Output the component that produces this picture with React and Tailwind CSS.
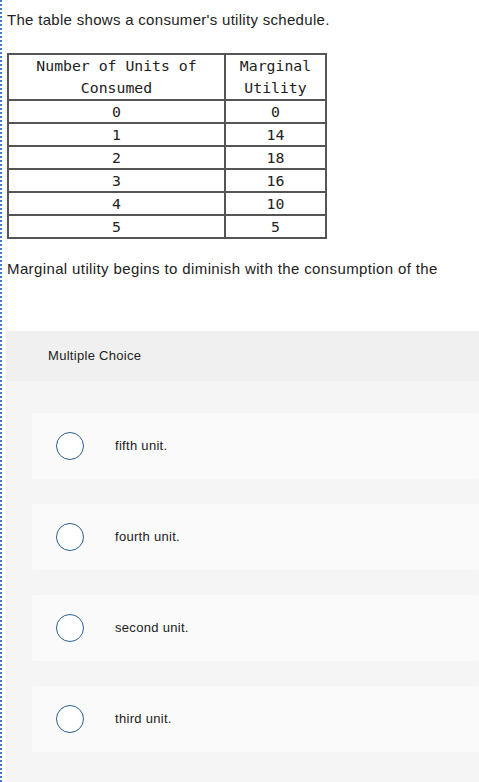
import React from 'react';

const rows = [
  ['0', '0'],
  ['1', '14'],
  ['2', '18'],
  ['3', '16'],
  ['4', '10'],
  ['5', '5'],
];

const choices = ['fifth unit.', 'fourth unit.', 'second unit.', 'third unit.'];

function Choice({ label }) {
  return (
    <div className="flex h-[66px] items-center rounded-[3px] bg-[#fafafa]">
      <span className="ml-[24px] h-[28px] w-[28px] rounded-full border-[1.5px] border-[#2c5f8f] bg-white" />
      <span className="ml-[31px] text-[13px] tracking-[0.3px] text-[#222]">{label}</span>
    </div>
  );
}

export default function App() {
  return (
    <div
      className="min-h-screen border-l-2 border-dotted border-[#3a7bd5] bg-white pl-[4px] text-[#222]"
      style={{ fontFamily: '"Liberation Sans", Arial, sans-serif' }}
    >
      <p className="ml-px pt-[10px] text-[15px] leading-[20px] tracking-[0.3px]">
        The table shows a consumer's utility schedule.
      </p>

      <table
        className="mt-[23px] ml-px border-collapse border-2 border-[#555] text-center text-[14.8px] text-[#222]"
        style={{ fontFamily: '"DejaVu Sans Mono", monospace' }}
      >
        <thead>
          <tr className="h-[44px]">
            <th className="w-[217px] border-2 border-[#555] px-2 font-normal leading-[22px]">
              Number of Units of
              <br />
              Consumed
            </th>
            <th className="w-[101px] border-2 border-[#555] px-2 font-normal leading-[22px]">
              Marginal
              <br />
              Utility
            </th>
          </tr>
        </thead>
        <tbody>
          {rows.map(([u, m]) => (
            <tr key={u} className="h-[23px]">
              <td className="border-2 border-[#555] leading-[18px]">{u}</td>
              <td className="border-2 border-[#555] leading-[18px]">{m}</td>
            </tr>
          ))}
        </tbody>
      </table>

      <p className="ml-px mt-[20px] text-[15px] leading-[20px] tracking-[0.38px]">
        Marginal utility begins to diminish with the consumption of the
      </p>

      <div className="mt-[52px]">
        <div className="flex h-[50px] items-center bg-[#f0f0f0] pl-[42px] text-[13px] tracking-[0.3px]">
          Multiple Choice
        </div>
        <div className="flex flex-col gap-[25px] bg-[#f5f5f5] pb-[30px] pl-[26px] pt-[32px]">
          {choices.map((c) => (
            <Choice key={c} label={c} />
          ))}
        </div>
      </div>
    </div>
  );
}
